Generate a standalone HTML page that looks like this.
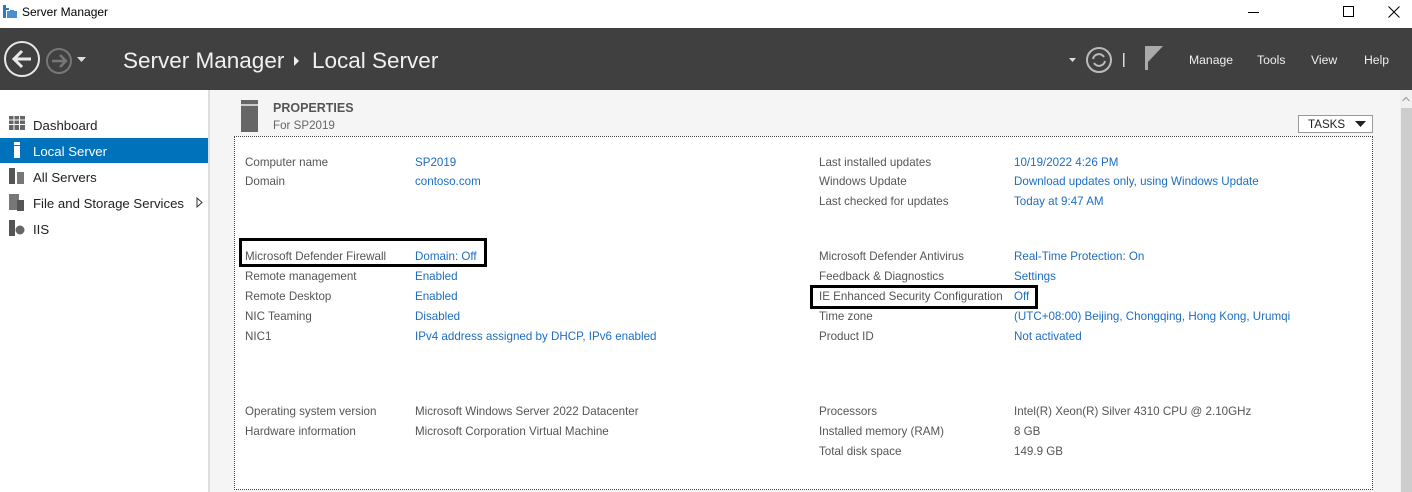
<!DOCTYPE html>
<html><head><style>
*{margin:0;padding:0;box-sizing:border-box}
body{width:1412px;height:492px;overflow:hidden;background:#fff;font-family:"Liberation Sans",sans-serif;position:relative}
.a{position:absolute;white-space:nowrap}
.l{font-size:11.6px;color:#555}
.v{font-size:11.6px;color:#1c6ec2}
.nav{font-size:13.2px;color:#222}
.box{position:absolute;border:3px solid #000}
</style></head><body>
<!-- title bar -->
<svg class="a" style="left:3px;top:5px" width="15" height="14"><rect x="0" y="0" width="3" height="13" fill="#2a7ac0"/><rect x="3" y="3" width="3" height="2" fill="#2a7ac0"/><rect x="4" y="6" width="10" height="7" fill="#4a8fd0"/><rect x="7" y="5" width="4" height="2" fill="#4a8fd0"/></svg>
<div class="a" style="left:22px;top:5px;font-size:12px;color:#000">Server Manager</div>
<div class="a" style="left:1248px;top:12px;width:11px;height:1px;background:#000"></div>
<div class="a" style="left:1343px;top:6px;width:11px;height:11px;border:1px solid #000"></div>
<svg class="a" style="left:1388px;top:6px" width="12" height="12"><path d="M0.5 0.5L11.5 11.5M11.5 0.5L0.5 11.5" stroke="#000" stroke-width="1"/></svg>
<!-- header -->
<div class="a" style="left:0;top:28px;width:1412px;height:62px;background:#404040"></div>
<svg class="a" style="left:4px;top:40px" width="86" height="40"><circle cx="18" cy="19" r="17" fill="none" stroke="#e8e8e8" stroke-width="2"/><path d="M27 19H11M18 11L10 19L18 27" fill="none" stroke="#e8e8e8" stroke-width="3"/><circle cx="55" cy="21" r="12" fill="none" stroke="#777" stroke-width="2"/><path d="M48 21H61M56 15L62 21L56 27" fill="none" stroke="#777" stroke-width="2.5"/><path d="M73 17h9l-4.5 5z" fill="#ddd"/></svg>
<div class="a" style="left:123px;top:48px;font-size:22.5px;color:#f0f0f0">Server Manager</div>
<svg class="a" style="left:294px;top:56px" width="6" height="10"><path d="M0 0L5 5L0 10z" fill="#eee"/></svg>
<div class="a" style="left:312px;top:48px;font-size:22.5px;color:#f0f0f0">Local Server</div>
<svg class="a" style="left:1066px;top:45px" width="100" height="30"><path d="M3 13h7l-3.5 4z" fill="#ddd"/><circle cx="33" cy="15" r="12" fill="none" stroke="#bbb" stroke-width="2"/><path d="M27 14a6 6 0 0 1 11-2M39 16a6 6 0 0 1-11 2" fill="none" stroke="#bbb" stroke-width="2"/><rect x="57" y="8" width="1.5" height="14" fill="#ddd"/><rect x="79" y="1" width="3" height="24" fill="#aaa"/><path d="M82 1H97L82 17z" fill="#aaa"/></svg>
<div class="a" style="left:1189px;top:53px;font-size:12.2px;color:#eee">Manage</div>
<div class="a" style="left:1257px;top:53px;font-size:12.2px;color:#eee">Tools</div>
<div class="a" style="left:1311px;top:53px;font-size:12.2px;color:#eee">View</div>
<div class="a" style="left:1364px;top:53px;font-size:12.2px;color:#eee">Help</div>
<!-- sidebar -->
<div class="a" style="left:0;top:90px;width:208px;height:402px;background:#fff"></div>
<div class="a" style="left:208px;top:90px;width:2px;height:402px;background:#ddd"></div>
<div class="a" style="left:0;top:138px;width:208px;height:25px;background:#0072bc"></div>
<svg class="a" style="left:9px;top:116px" width="16" height="125">
<rect x="0" y="0" width="16" height="14" fill="#666"/><path d="M0 4H16M0 8.5H16M5 0V14M10.5 0V14" stroke="#fff" stroke-width="1"/>
<rect x="5" y="26" width="6" height="16" fill="#fff"/><rect x="5" y="29" width="6" height="1" fill="#0072bc"/>
<rect x="0" y="52" width="6" height="16" fill="#555"/><rect x="8" y="56" width="7" height="12" fill="#777"/>
<rect x="0" y="78" width="10" height="16" fill="#777"/><rect x="8" y="84" width="7" height="11" fill="#555"/>
<rect x="0" y="104" width="6" height="16" fill="#555"/><circle cx="11" cy="114" r="4.5" fill="#666"/>
</svg>
<div class="a nav" style="left:33px;top:118px">Dashboard</div>
<div class="a nav" style="left:33px;top:144px;color:#fff">Local Server</div>
<div class="a nav" style="left:33px;top:170px">All Servers</div>
<div class="a nav" style="left:33px;top:196px">File and Storage Services</div>
<svg class="a" style="left:196px;top:197px" width="7" height="11"><path d="M1 1L6 5.5L1 10z" fill="none" stroke="#333"/></svg>
<div class="a nav" style="left:33px;top:222px">IIS</div>
<!-- main -->
<div class="a" style="left:210px;top:90px;width:1190px;height:402px;background:#f5f5f5"></div>
<div class="a" style="left:1400px;top:90px;width:12px;height:402px;background:#f0f0f0"></div>
<div class="a" style="left:1401px;top:108px;width:11px;height:384px;background:#cdcdcd"></div>
<svg class="a" style="left:1402px;top:96px" width="8" height="6"><path d="M0.5 5L4 1.5L7.5 5" fill="none" stroke="#999"/></svg>
<div class="a" style="left:241px;top:100px;width:17px;height:32px;background:#666"></div>
<div class="a" style="left:241px;top:104px;width:17px;height:2px;background:#ccc"></div>
<div class="a" style="left:273px;top:101px;font-size:12.5px;font-weight:bold;color:#555">PROPERTIES</div>
<div class="a" style="left:273px;top:119px;font-size:11.6px;color:#666">For SP2019</div>
<div class="a" style="left:1298px;top:115px;width:75px;height:18px;border:1px solid #999;background:#fff;font-size:11.6px;color:#222;padding:2px 0 0 9px">TASKS</div>
<svg class="a" style="left:1355px;top:121px" width="11" height="6"><path d="M0 0H11L5.5 6z" fill="#222"/></svg>
<div class="a" style="left:234px;top:136px;width:1139px;height:354px;background:#fff;border:1px dotted #444"></div>

<div class="a l" style="left:245px;top:156px">Computer name</div><div class="a v" style="left:415px;top:156px">SP2019</div>
<div class="a l" style="left:245px;top:175px">Domain</div><div class="a v" style="left:415px;top:175px">contoso.com</div>
<div class="a l" style="left:245px;top:250px">Microsoft Defender Firewall</div><div class="a v" style="left:415px;top:250px">Domain: Off</div>
<div class="a l" style="left:245px;top:270px">Remote management</div><div class="a v" style="left:415px;top:270px">Enabled</div>
<div class="a l" style="left:245px;top:290px">Remote Desktop</div><div class="a v" style="left:415px;top:290px">Enabled</div>
<div class="a l" style="left:245px;top:310px">NIC Teaming</div><div class="a v" style="left:415px;top:310px">Disabled</div>
<div class="a l" style="left:245px;top:330px">NIC1</div><div class="a v" style="left:415px;top:330px">IPv4 address assigned by DHCP, IPv6 enabled</div>
<div class="a l" style="left:245px;top:405px">Operating system version</div><div class="a l" style="left:415px;top:405px">Microsoft Windows Server 2022 Datacenter</div>
<div class="a l" style="left:245px;top:425px">Hardware information</div><div class="a l" style="left:415px;top:425px">Microsoft Corporation Virtual Machine</div>

<div class="a l" style="left:819px;top:156px">Last installed updates</div><div class="a v" style="left:1014px;top:156px">10/19/2022 4:26 PM</div>
<div class="a l" style="left:819px;top:175px">Windows Update</div><div class="a v" style="left:1014px;top:175px">Download updates only, using Windows Update</div>
<div class="a l" style="left:819px;top:195px">Last checked for updates</div><div class="a v" style="left:1014px;top:195px">Today at 9:47 AM</div>
<div class="a l" style="left:819px;top:250px">Microsoft Defender Antivirus</div><div class="a v" style="left:1014px;top:250px">Real-Time Protection: On</div>
<div class="a l" style="left:819px;top:270px">Feedback &amp; Diagnostics</div><div class="a v" style="left:1014px;top:270px">Settings</div>
<div class="a l" style="left:819px;top:290px">IE Enhanced Security Configuration</div><div class="a v" style="left:1014px;top:290px">Off</div>
<div class="a l" style="left:819px;top:310px">Time zone</div><div class="a v" style="left:1014px;top:310px">(UTC+08:00) Beijing, Chongqing, Hong Kong, Urumqi</div>
<div class="a l" style="left:819px;top:330px">Product ID</div><div class="a v" style="left:1014px;top:330px">Not activated</div>
<div class="a l" style="left:819px;top:405px">Processors</div><div class="a l" style="left:1014px;top:405px">Intel(R) Xeon(R) Silver 4310 CPU @ 2.10GHz</div>
<div class="a l" style="left:819px;top:425px">Installed memory (RAM)</div><div class="a l" style="left:1014px;top:425px">8 GB</div>
<div class="a l" style="left:819px;top:445px">Total disk space</div><div class="a l" style="left:1014px;top:445px">149.9 GB</div>

<div class="box" style="left:239px;top:238px;width:248px;height:29px"></div>
<div class="box" style="left:810px;top:285px;width:228px;height:24px"></div>
</body></html>
